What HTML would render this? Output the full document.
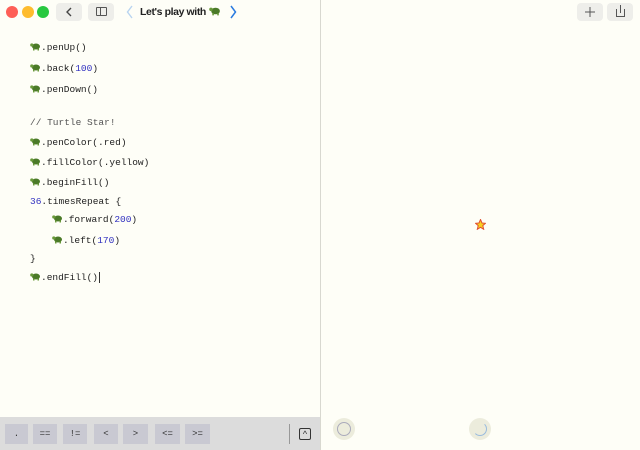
<!DOCTYPE html>
<html><head><meta charset="utf-8"><style>
*{margin:0;padding:0;box-sizing:border-box}
body{width:640px;height:450px;position:relative;background:#fefef7;font-family:"Liberation Sans",sans-serif;overflow:hidden}
.dot{position:absolute;border-radius:50%;width:12px;height:12px;top:6px}
.tb{position:absolute;top:3px;height:18px;background:#eeeeea;border-radius:4px}
.code{position:absolute;font-family:"Liberation Mono",monospace;font-size:9.5px;color:#222;left:30px;white-space:pre}
.n{color:#3030c0}
.c{color:#555}
.t{display:inline-block;width:11px;height:9px;vertical-align:-1px;margin-right:0}
.bar{position:absolute;left:0;top:417px;width:320px;height:33px;background:#dcdcdc}
.k{position:absolute;top:424px;height:20px;background:#c9c9d2;font-family:"Liberation Mono",monospace;font-size:9px;color:#333;text-align:center;line-height:20px}
</style></head><body>
<svg width="0" height="0" style="position:absolute"><defs><symbol id="tt" viewBox="0 0 11 9"><ellipse cx="6" cy="4.5" rx="4" ry="3" fill="#4b7a28"/><circle cx="1.8" cy="3" r="1.6" fill="#6a9a3a"/><rect x="3" y="6.5" width="1.5" height="2" fill="#6a9a3a"/><rect x="7.5" y="6.5" width="1.5" height="2" fill="#6a9a3a"/></symbol></defs></svg>
<div class="dot" style="left:6px;background:#fe5f57"></div>
<div class="dot" style="left:22px;background:#febc2e"></div>
<div class="dot" style="left:37px;background:#28c840"></div>
<div class="tb" style="left:56px;width:26px"><svg style="position:absolute;left:9px;top:4px" width="8" height="10"><path d="M6 1 L2 5 L6 9" stroke="#444" stroke-width="1.4" fill="none"/></svg></div>
<div class="tb" style="left:88px;width:26px"><div style="position:absolute;left:8px;top:4px;width:11px;height:9px;border:1px solid #555;border-radius:1px"></div><div style="position:absolute;left:12px;top:4px;width:1px;height:9px;background:#555"></div></div>
<svg style="position:absolute;left:126px;top:5px" width="8" height="14"><path d="M6 1 L1.5 7 L6 13" stroke="#b8d4f0" stroke-width="1.4" fill="none"/></svg>
<div style="position:absolute;left:140px;top:6px;font-size:10.5px;letter-spacing:-0.4px;font-weight:bold;color:#222;white-space:nowrap">Let's play with <svg class="t" style="width:12px;height:10px;margin-left:1px"><use href="#tt"/></svg></div>
<svg style="position:absolute;left:229px;top:5px" width="8" height="14"><path d="M2 1 L6.5 7 L2 13" stroke="#2a7be0" stroke-width="1.5" fill="none"/></svg>
<div class="tb" style="left:577px;width:26px"><svg style="position:absolute;left:8px;top:4px" width="10" height="10"><path d="M5 0V10M0 5H10" stroke="#555" stroke-width="1"/></svg></div>
<div class="tb" style="left:607px;width:26px"><div style="position:absolute;left:9px;top:6px;width:9px;height:8px;border:1px solid #555;border-top:none"></div><div style="position:absolute;left:13px;top:2px;width:1px;height:8px;background:#555"></div></div>
<div style="position:absolute;left:320px;top:0;width:1px;height:450px;background:#d8d8d0"></div>

<div class="code" style="top:42px"><svg class="t"><use href="#tt"/></svg>.penUp()</div>
<div class="code" style="top:63px"><svg class="t"><use href="#tt"/></svg>.back(<span class="n">100</span>)</div>
<div class="code" style="top:84px"><svg class="t"><use href="#tt"/></svg>.penDown()</div>
<div class="code c" style="top:117px">// Turtle Star!</div>
<div class="code" style="top:137px"><svg class="t"><use href="#tt"/></svg>.penColor(.red)</div>
<div class="code" style="top:157px"><svg class="t"><use href="#tt"/></svg>.fillColor(.yellow)</div>
<div class="code" style="top:177px"><svg class="t"><use href="#tt"/></svg>.beginFill()</div>
<div class="code" style="top:196px"><span class="n">36</span>.timesRepeat {</div>
<div class="code" style="top:214px;left:52px"><svg class="t"><use href="#tt"/></svg>.forward(<span class="n">200</span>)</div>
<div class="code" style="top:235px;left:52px"><svg class="t"><use href="#tt"/></svg>.left(<span class="n">170</span>)</div>
<div class="code" style="top:253px">}</div>
<div class="code" style="top:272px"><svg class="t"><use href="#tt"/></svg>.endFill()<span style="border-left:1px solid #333;margin-left:1px"></span></div>

<svg style="position:absolute;left:475px;top:219px" width="11" height="11" viewBox="0 0 11 11"><polygon points="5.5,0.5 7,4 10.5,4.3 7.8,6.6 8.7,10.3 5.5,8.3 2.3,10.3 3.2,6.6 0.5,4.3 4,4" fill="#f8d020" stroke="#e05030" stroke-width="1"/></svg>

<div class="bar"></div>
<div class="k" style="left:5px;width:23px">.</div>
<div class="k" style="left:33px;width:24px">==</div>
<div class="k" style="left:63px;width:24px">!=</div>
<div class="k" style="left:94px;width:24px">&lt;</div>
<div class="k" style="left:123px;width:25px">&gt;</div>
<div class="k" style="left:155px;width:25px">&lt;=</div>
<div class="k" style="left:185px;width:25px">&gt;=</div>
<div style="position:absolute;left:289px;top:424px;width:1px;height:20px;background:#999"></div>
<div style="position:absolute;left:299px;top:428px;width:12px;height:12px;border:1px solid #333;border-radius:2px;font-size:9px;text-align:center;line-height:11px;color:#333">^</div>
<div style="position:absolute;left:333px;top:418px;width:22px;height:22px;border-radius:50%;background:#ececdc"></div>
<div style="position:absolute;left:337px;top:422px;width:14px;height:14px;border-radius:50%;border:1px solid #aab"></div>
<div style="position:absolute;left:469px;top:418px;width:22px;height:22px;border-radius:50%;background:#ececdc"></div>
<div style="position:absolute;left:473px;top:422px;width:14px;height:14px;border-radius:50%;border:1px solid #9bd;border-left-color:transparent;border-top-color:transparent"></div>
</body></html>
